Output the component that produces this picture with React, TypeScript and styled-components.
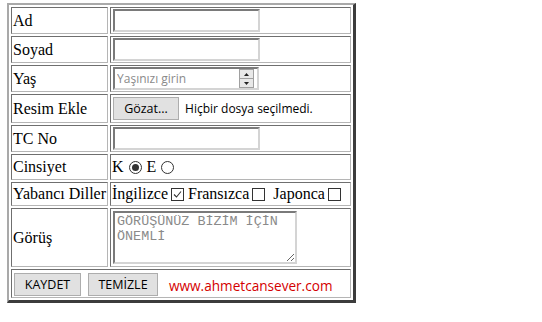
import React from "react";
import styled, { createGlobalStyle } from "styled-components";

const Global = createGlobalStyle`
  html, body { background: #fff; }
  body { margin: 3px 7px; font-family: "Liberation Serif", "Times New Roman", serif; font-size: 16px; color: #000; }
`;

const Table = styled.table`
  box-sizing: border-box;
  border-collapse: separate;
  border-spacing: 2px;
  border-style: solid;
  border-width: 2px 3px 3px 2px;
  border-color: #a9a9a9 #3c3c3c #3c3c3c #a9a9a9;
  width: 349px;
`;

const Cell = styled.td<{ $label?: boolean }>`
  border: 1px solid;
  border-color: #6f6f6f #b5b5b5 #b5b5b5 #6f6f6f;
  padding: 1px;
  vertical-align: middle;
  white-space: nowrap;
  font-family: "Liberation Serif", serif;
  font-size: 16px;
  line-height: 20px;
  width: ${(p) => (p.$label ? "93px" : "auto")};
`;

const TextInput = styled.input`
  box-sizing: border-box;
  display: block;
  width: 147px;
  height: 23px;
  margin: 0 0 0 1px;
  border: 2px solid;
  border-color: #7a7a7a #d4d4d4 #d4d4d4 #7a7a7a;
  padding: 1px 2px;
  font-family: "Open Sans", sans-serif;
  font-size: 12px;
  outline: none;
  &::placeholder { color: #8a8a8a; }
`;

const NumberWrap = styled.div`
  box-sizing: border-box;
  display: flex;
  align-items: center;
  width: 146px;
  height: 23px;
  margin-left: 1px;
  border: 2px solid;
  border-color: #7a7a7a #d4d4d4 #d4d4d4 #7a7a7a;
  padding: 0 2px;
`;

const NumberText = styled.input`
  flex: 1;
  min-width: 0;
  border: none;
  outline: none;
  padding: 0;
  font-family: "Open Sans", sans-serif;
  font-size: 12px;
  &::placeholder { color: #8a8a8a; }
`;

const Spinner = styled.div`
  display: flex;
  flex-direction: column;
  width: 13px;
  height: 17px;
  border: 1px solid #a0a0a0;
  margin-right: 1px;
`;

const SpinHalf = styled.div`
  flex: 1;
  display: flex;
  align-items: center;
  justify-content: center;
  background: #e8e8e8;
  & + & { border-top: 1px solid #a0a0a0; }
`;

const FileRow = styled.div`
  display: flex;
  align-items: center;
  gap: 6px;
  height: 25px;
  padding-left: 1px;
`;

const Button = styled.button<{ $w: number }>`
  box-sizing: border-box;
  width: ${(p) => p.$w}px;
  height: 23px;
  margin: 0;
  padding: 0 4px;
  background: #e1e1e1;
  border: 1px solid #adadad;
  font-family: "Open Sans", sans-serif;
  font-size: 12.5px;
  color: #000;
`;

const SmallText = styled.span`
  font-family: "Open Sans", sans-serif;
  font-size: 12px;
`;

const Inline = styled.div<{ $h: number }>`
  display: flex;
  align-items: center;
  height: ${(p) => p.$h}px;
`;

const Radio = styled.span<{ $on?: boolean }>`
  box-sizing: border-box;
  display: inline-flex;
  align-items: center;
  justify-content: center;
  width: 13px;
  height: 13px;
  border: 1px solid #333;
  border-radius: 50%;
  margin: 0 5px 0 5px;
  background: #fff;
  &::after {
    content: "";
    display: ${(p) => (p.$on ? "block" : "none")};
    width: 7px;
    height: 7px;
    border-radius: 50%;
    background: #333;
  }
`;

const Check = styled.span`
  box-sizing: border-box;
  display: inline-flex;
  align-items: center;
  justify-content: center;
  width: 13px;
  height: 13px;
  border: 1px solid #333;
  margin: 0 4px 0 3px;
  background: #fff;
`;

const TextArea = styled.textarea`
  box-sizing: border-box;
  display: block;
  width: 184px;
  height: 53px;
  margin: 1px 0 1px 1px;
  border: 2px solid;
  border-color: #7a7a7a #d4d4d4 #d4d4d4 #7a7a7a;
  padding: 1px 2px;
  font-family: "Liberation Mono", monospace;
  font-size: 13.4px;
  line-height: 15px;
  resize: both;
  outline: none;
  &::placeholder { color: #8a8a8a; }
`;

const ButtonRow = styled.div`
  display: flex;
  align-items: flex-start;
  gap: 7px;
  height: 25px;
  padding: 2px 1px 0 1px;
  box-sizing: border-box;
`;

const Site = styled.span`
  font-family: "Open Sans", sans-serif;
  font-size: 13.6px;
  color: #d40000;
  margin-left: 4px;
  padding-top: 3px;
`;

const CheckMark = () => (
  <svg width="9" height="9" viewBox="0 0 9 9">
    <path d="M1 4.5 L3.5 7 L8 1.5" fill="none" stroke="#333" strokeWidth="1.1" />
  </svg>
);

export default function App() {
  return (
    <>
      <Global />
      <Table>
        <tbody>
          <tr>
            <Cell $label>Ad</Cell>
            <Cell><TextInput type="text" /></Cell>
          </tr>
          <tr>
            <Cell $label>Soyad</Cell>
            <Cell><TextInput type="text" /></Cell>
          </tr>
          <tr>
            <Cell $label>Yaş</Cell>
            <Cell>
              <NumberWrap>
                <NumberText placeholder="Yaşınızı girin" />
                <Spinner>
                  <SpinHalf>
                    <svg width="5" height="3" viewBox="0 0 5 3"><path d="M0 3 L2.5 0 L5 3 Z" fill="#222" /></svg>
                  </SpinHalf>
                  <SpinHalf>
                    <svg width="5" height="3" viewBox="0 0 5 3"><path d="M0 0 L2.5 3 L5 0 Z" fill="#222" /></svg>
                  </SpinHalf>
                </Spinner>
              </NumberWrap>
            </Cell>
          </tr>
          <tr>
            <Cell $label>Resim Ekle</Cell>
            <Cell>
              <FileRow>
                <Button $w={66} type="button">Gözat...</Button>
                <SmallText>Hiçbir dosya seçilmedi.</SmallText>
              </FileRow>
            </Cell>
          </tr>
          <tr>
            <Cell $label>TC No</Cell>
            <Cell><TextInput type="text" /></Cell>
          </tr>
          <tr>
            <Cell $label>Cinsiyet</Cell>
            <Cell>
              <Inline $h={22}>K<Radio $on />E<Radio /></Inline>
            </Cell>
          </tr>
          <tr>
            <Cell $label>Yabancı Diller</Cell>
            <Cell>
              <Inline $h={20}>
                İngilizce<Check><CheckMark /></Check>Fransızca<Check />&nbsp;Japonca<Check />
              </Inline>
            </Cell>
          </tr>
          <tr>
            <Cell $label>Görüş</Cell>
            <Cell><TextArea placeholder="GÖRÜŞÜNÜZ BİZİM İÇİN ÖNEMLİ" /></Cell>
          </tr>
          <tr>
            <Cell colSpan={2}>
              <ButtonRow>
                <Button $w={67} type="button">KAYDET</Button>
                <Button $w={70} type="button">TEMİZLE</Button>
                <Site>www.ahmetcansever.com</Site>
              </ButtonRow>
            </Cell>
          </tr>
        </tbody>
      </Table>
    </>
  );
}
